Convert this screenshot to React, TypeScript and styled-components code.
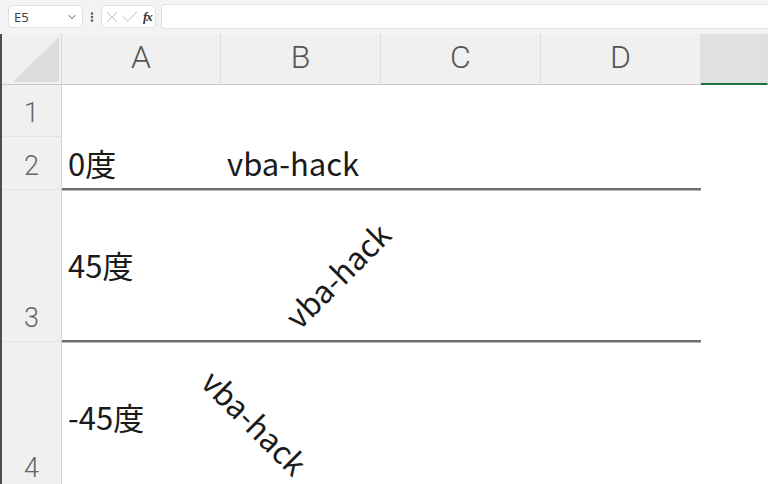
import React from 'react';
import styled, { createGlobalStyle } from 'styled-components';
import { ChevronDown, EllipsisVertical, X, Check } from 'lucide-react';

const GlobalStyle = createGlobalStyle`
  html, body {
    margin: 0;
    padding: 0;
    background: #f3f3f3;
    overflow: hidden;
  }
  #root {
    width: 768px;
    height: 484px;
  }
`;

const Window = styled.div`
  display: flex;
  flex-direction: column;
  width: 768px;
  height: 484px;
  background: #f3f3f3;
  font-family: 'Noto Sans CJK JP', 'Noto Sans', sans-serif;
`;

const Toolbar = styled.div`
  display: flex;
  align-items: center;
  gap: 5px;
  height: 34px;
  padding: 0 0 1px 8px;
  box-sizing: border-box;
`;

const NameBox = styled.div`
  display: flex;
  align-items: center;
  justify-content: space-between;
  width: 75px;
  height: 23px;
  padding: 0 4px 0 5px;
  box-sizing: border-box;
  background: #fff;
  border: 1px solid #e2e2e2;
  border-radius: 4px;
  font-family: 'Noto Sans', sans-serif;
  font-size: 13px;
  color: #404040;
`;

const Dots = styled.div`
  display: flex;
  align-items: center;
  color: #555;
  margin: 0 -2px;
`;

const FxGroup = styled.div`
  display: flex;
  align-items: center;
  width: 55px;
  height: 23px;
  padding: 0;
  box-sizing: border-box;
  background: #fff;
  border: 1px solid #e2e2e2;
  border-radius: 4px;
  color: #b8b8b8;

  svg {
    flex-shrink: 0;
    margin-right: -2px;
  }
`;

const FxLabel = styled.span`
  font-family: 'Liberation Serif', serif;
  font-style: italic;
  font-weight: bold;
  font-size: 13px;
  color: #333;
  margin-left: 5px;
  letter-spacing: -1px;
`;

const FormulaInput = styled.div`
  flex: 1;
  height: 23px;
  background: #fff;
  border: 1px solid #e2e2e2;
  border-right: none;
  border-radius: 4px 0 0 4px;
`;

const Sheet = styled.div`
  flex: 1;
  display: grid;
  grid-template-columns: 60px 159px 160px 160px 160px 1fr;
  grid-template-rows: 51px 52px 53px 152px 150px;
  background: #fff;
  border-left: 2px solid #4d4d4d;
  overflow: hidden;
`;

const Corner = styled.div`
  display: flex;
  align-items: flex-end;
  justify-content: flex-end;
  padding: 0 2px 2px 0;
  background: #f0f0f0;
  border-right: 1px solid #d6d6d6;
  border-bottom: 1px solid #c8c8c8;
`;

const ColHeader = styled.div<{ $selected?: boolean }>`
  display: flex;
  align-items: center;
  justify-content: center;
  padding-bottom: 4px;
  background: ${({ $selected }) => ($selected ? '#e0e0e0' : '#f0f0f0')};
  border-right: 1px solid #dcdcdc;
  border-bottom: ${({ $selected }) => ($selected ? '2px solid #1e7145' : '1px solid #c8c8c8')};
  font-family: Roboto, 'Noto Sans', sans-serif;
  font-weight: 300;
  font-size: 32px;
  color: #555;
`;

const RowHeader = styled.div`
  display: flex;
  align-items: flex-end;
  justify-content: center;
  padding-bottom: 9px;
  background: #f0f0f0;
  border-right: 1px solid #d6d6d6;
  border-bottom: 1px solid #e2e2e2;
  font-family: Roboto, 'Noto Sans', sans-serif;
  font-weight: 300;
  font-size: 27px;
  line-height: 1;
  color: #666;
`;

const Cell = styled.div<{ $valign?: 'center' | 'flex-end'; $rule?: boolean }>`
  position: relative;
  display: flex;
  align-items: ${({ $valign }) => $valign || 'flex-end'};
  padding: 0 0 ${({ $valign }) => ($valign === 'center' ? '0' : '8px')} 6px;
  font-size: 31px;
  line-height: 1.1;
  color: #1a1a1a;
  white-space: nowrap;
  overflow: visible;
  border-bottom: ${({ $rule }) => ($rule ? '2px solid #6e6e6e' : 'none')};
  box-shadow: ${({ $rule }) => ($rule ? '0 1px 0 #b8b8b8' : 'none')};
`;

const Rotated = styled.span<{ $angle: number; $dx: number; $dy: number }>`
  display: inline-block;
  transform: translate(${({ $dx }) => $dx}px, ${({ $dy }) => $dy}px) rotate(${({ $angle }) => $angle}deg);
  transform-origin: center;
`;

function CornerTriangle() {
  return (
    <svg width="46" height="45" viewBox="0 0 46 45">
      <polygon points="46,0 46,45 0,45" fill="#dcdcdc" />
    </svg>
  );
}

export default function App() {
  const cols = ['A', 'B', 'C', 'D'];
  return (
    <Window>
      <GlobalStyle />
      <Toolbar>
        <NameBox>
          <span>E5</span>
          <ChevronDown size={12} color="#555" />
        </NameBox>
        <Dots>
          <EllipsisVertical size={12} strokeWidth={3} />
        </Dots>
        <FxGroup>
          <X size={20} strokeWidth={1.1} />
          <Check size={20} strokeWidth={1.1} />
          <FxLabel>fx</FxLabel>
        </FxGroup>
        <FormulaInput />
      </Toolbar>

      <Sheet>
        <Corner>
          <CornerTriangle />
        </Corner>
        {cols.map((c) => (
          <ColHeader key={c}>{c}</ColHeader>
        ))}
        <ColHeader $selected />

        <RowHeader>1</RowHeader>
        <Cell />
        <Cell />
        <Cell />
        <Cell />
        <Cell />

        <RowHeader>2</RowHeader>
        <Cell $rule>0度</Cell>
        <Cell $rule>vba-hack</Cell>
        <Cell $rule />
        <Cell $rule />
        <Cell />

        <RowHeader>3</RowHeader>
        <Cell $rule $valign="center">45度</Cell>
        <Cell $rule $valign="center">
          <Rotated $angle={-45} $dx={44} $dy={10}>vba-hack</Rotated>
        </Cell>
        <Cell $rule />
        <Cell $rule />
        <Cell />

        <RowHeader>4</RowHeader>
        <Cell $valign="center">-45度</Cell>
        <Cell $valign="center">
          <Rotated $angle={45} $dx={-38} $dy={5}>vba-hack</Rotated>
        </Cell>
        <Cell />
        <Cell />
        <Cell />
      </Sheet>
    </Window>
  );
}
